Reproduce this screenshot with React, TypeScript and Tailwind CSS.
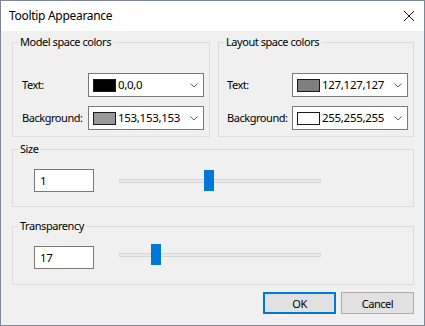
import { ReactNode } from "react";

/* Opções de cor exibidas nas caixas de seleção */
interface ColorOption {
  label: string;
  swatch: string;
}

/* Caixa de seleção com amostra de cor */
function ColorCombo({ label, swatch }: ColorOption) {
  return (
    <div className="flex items-center h-[24px] w-[116px] border border-[#7a7a7a] bg-white pl-[4px] pr-[5px]">
      <span className={`w-[23px] h-[13px] border border-[#1a1a1a] ${swatch}`} />
      <span className="ml-[2px] flex-1 text-black text-[11.5px] tracking-[-0.3px] leading-none">{label}</span>
      <svg width="8" height="5" viewBox="0 0 8 5" className="shrink-0">
        <path d="M0.5 0.5 L4 4 L7.5 0.5" fill="none" stroke="#606060" strokeWidth="1" />
      </svg>
    </div>
  );
}

/* Grupo com borda e título, no estilo do Windows */
function Group({ title, className, children }: { title: string; className?: string; children: ReactNode }) {
  return (
    <fieldset className={`border border-[#dcdcdc] px-[5px] ${className ?? ""}`}>
      <legend className="px-[2px] leading-[16px]">{title}</legend>
      {children}
    </fieldset>
  );
}

/* Linha com rótulo e caixa de cor */
function ColorRow({ name, labelWidth, option }: { name: string; labelWidth: string; option: ColorOption }) {
  return (
    <div className="flex items-center">
      <span className={labelWidth}>{name}</span>
      <ColorCombo {...option} />
    </div>
  );
}

/* Campo numérico + controle deslizante */
function SliderRow({ value, thumb, offset }: { value: string; thumb: string; offset: string }) {
  return (
    <div className="flex items-start pl-[16px]">
      <div className="w-[60px] h-[23px] border border-[#7a7a7a] bg-white flex items-center pl-[5px] text-[11.5px]">
        {value}
      </div>
      <div className={`relative ml-[25px] w-[202px] h-[21px] flex items-center ${offset}`}>
        <div className="w-full h-[4px] border border-[#d6d6d6] bg-[#e7eaea]" />
        <div className={`absolute top-0 w-[10px] h-[21px] bg-[#0078d7] ${thumb}`} />
      </div>
    </div>
  );
}

export default function App() {
  return (
    <div className="w-[425px] h-[326px] border border-[#7a8599] bg-[#f0f0f0] flex flex-col font-['Noto_Sans','Liberation_Sans',sans-serif] text-[11px] tracking-[-0.45px] text-black">

      {/* Barra de título */}
      <div className="h-[30px] bg-white flex items-center justify-between pl-[8px] pr-[10px]">
        <span className="pb-[1px] text-[12px] tracking-[-0.3px]">Tooltip Appearance</span>
        <svg width="10" height="10" viewBox="0 0 10 10">
          <path d="M0 0 L10 10 M10 0 L0 10" stroke="#111" strokeWidth="1" />
        </svg>
      </div>

      {/* Conteúdo do diálogo */}
      <div className="flex flex-col pt-[3px] pl-[11px] pr-[10px]">

        {/* Cores de espaço de modelo e de layout */}
        <div className="flex gap-[8px]">
          <Group title="Model space colors" className="w-[197px] pt-[23px] pb-[6px]">
            <div className="flex flex-col gap-[9px] pl-[4px]">
              <ColorRow name="Text:" labelWidth="w-[66px]" option={{ label: "0,0,0", swatch: "bg-black" }} />
              <ColorRow name="Background:" labelWidth="w-[66px]" option={{ label: "153,153,153", swatch: "bg-[#999999]" }} />
            </div>
          </Group>
          <Group title="Layout space colors" className="w-[197px] pt-[23px] pb-[6px]">
            <div className="flex flex-col gap-[9px] pl-[3px]">
              <ColorRow name="Text:" labelWidth="w-[65px]" option={{ label: "127,127,127", swatch: "bg-[#7f7f7f]" }} />
              <ColorRow name="Background:" labelWidth="w-[65px]" option={{ label: "255,255,255", swatch: "bg-white" }} />
            </div>
          </Group>
        </div>

        {/* Tamanho */}
        <Group title="Size" className="mt-[4px] pt-[12px] pb-[14px]">
          <SliderRow value="1" thumb="left-[85px]" offset="mt-[1px]" />
        </Group>

        {/* Transparência */}
        <Group title="Transparency" className="mt-[11px] pt-[12px] pb-[15px]">
          <SliderRow value="17" thumb="left-[32px]" offset="mt-[-2px]" />
        </Group>

        {/* Botões de ação */}
        <div className="flex justify-end gap-[5px] mt-[7px]">
          <button className="w-[73px] h-[22px] border-2 border-[#0078d7] bg-[#e1e1e1] leading-none">OK</button>
          <button className="w-[73px] h-[22px] border border-[#adadad] bg-[#e1e1e1] leading-none">Cancel</button>
        </div>
      </div>
    </div>
  );
}
